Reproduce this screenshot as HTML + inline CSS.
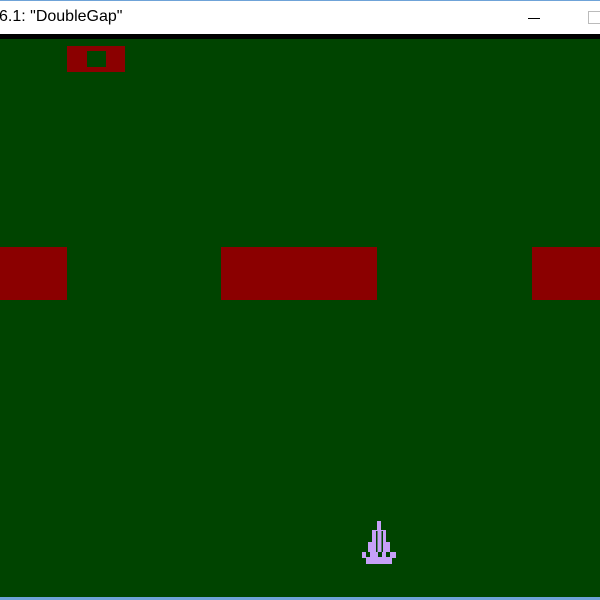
<!DOCTYPE html>
<html><head><style>
body{margin:0;width:600px;height:600px;overflow:hidden;background:#004400;position:relative;font-family:"Liberation Sans",sans-serif}
.d{position:absolute}
</style></head><body>
<div class="d" style="left:0;top:0;width:600px;height:1px;background:#6fa3d8"></div>
<div class="d" style="left:0;top:1px;width:600px;height:33px;background:#fff"></div>
<div class="d" style="left:-1px;top:8px;font-size:16px;color:#000">6.1: "DoubleGap"</div>
<div class="d" style="left:528px;top:18px;width:12px;height:1px;background:#000"></div>
<div class="d" style="left:588px;top:11px;width:13px;height:13px;border:1px solid #bbb;box-sizing:border-box"></div>
<div class="d" style="left:0;top:34px;width:600px;height:5px;background:#000"></div>
<div class="d" style="left:67px;top:46px;width:58px;height:26px;background:#8b0000"></div>
<div class="d" style="left:87px;top:51px;width:19px;height:16px;background:#004400"></div>
<div class="d" style="left:0;top:247px;width:67px;height:53px;background:#8b0000"></div>
<div class="d" style="left:221px;top:247px;width:156px;height:53px;background:#8b0000"></div>
<div class="d" style="left:532px;top:247px;width:68px;height:53px;background:#8b0000"></div>
<svg class="d" style="left:0;top:0" width="600" height="600">
<g fill="#c6a0f8">
<rect x="377" y="521" width="4" height="10"/>
<rect x="372" y="530" width="14" height="12"/>
<rect x="368" y="542" width="22" height="10"/>
<rect x="362" y="552" width="34" height="6"/>
<rect x="366" y="558" width="26" height="6"/>
</g>
<g fill="#004400">
<rect x="376" y="531" width="1.5" height="21"/>
<rect x="381.5" y="531" width="1.5" height="21"/>
<rect x="366" y="552" width="4" height="5"/>
<rect x="378" y="552" width="4" height="5"/>
<rect x="386" y="552" width="4" height="5"/>
</g>
<rect x="0" y="597" width="600" height="3" fill="#6fa3d8"/>
</svg>
</body></html>
